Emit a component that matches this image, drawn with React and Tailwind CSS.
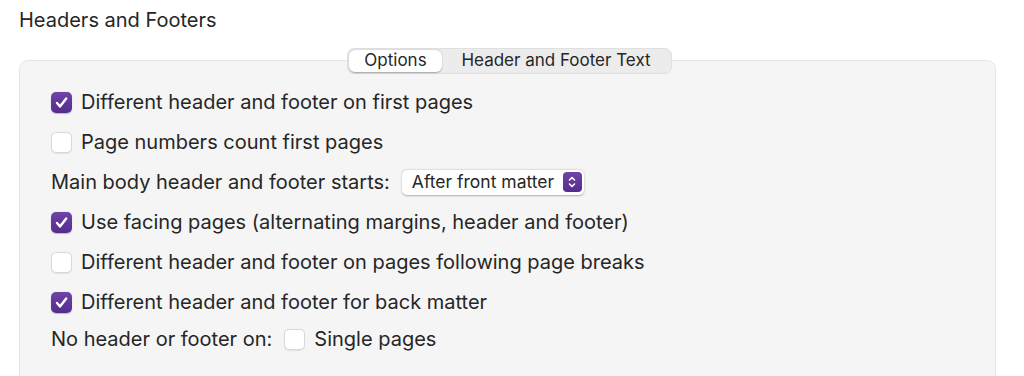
import React from 'react'

const font = { fontFamily: 'Inter, "Liberation Sans", Arial, sans-serif' }

const Check = ({ checked }) =>
  checked ? (
    <span className="flex h-[21px] w-[21px] shrink-0 items-center justify-center rounded-[5px] bg-gradient-to-b from-[#6e45a8] to-[#552c8c] shadow-[0_0.5px_1px_rgba(0,0,0,0.25)]">
      <svg width="15" height="15" viewBox="0 0 15 15" fill="none">
        <path d="M3 8 L6 11.5 L12.2 3.5" stroke="white" strokeWidth="2.4" strokeLinecap="round" strokeLinejoin="round" />
      </svg>
    </span>
  ) : (
    <span className="h-[21px] w-[21px] shrink-0 rounded-[5px] border border-[#d9d9d9] bg-white shadow-[0_0.5px_1px_rgba(0,0,0,0.08)]" />
  )

const CheckRow = ({ checked, label }) => (
  <div className="flex h-[40px] items-center gap-[9px] pl-[31px]">
    <Check checked={checked} />
    <span>{label}</span>
  </div>
)

export default function App() {
  return (
    <div className="h-[376px] w-[1024px] overflow-hidden bg-white text-[20px] text-[#262626]" style={font}>
      <div className="pl-[19px] pt-[8px] text-[20px] leading-[24px]">Headers and Footers</div>
      <div className="relative mx-[19px] mt-[28px] h-[400px] w-[977px] rounded-[9px] border border-[#e6e6e6] bg-[#f5f5f5]">
        <div className="absolute left-[327px] top-[-13px] flex h-[26px] items-center rounded-[7px] border border-[#e0e0e0] bg-[#ececec] p-[1px] text-[17px]">
          <div className="flex h-[22px] w-[93px] items-center justify-center rounded-[6px] bg-white shadow-[0_0.5px_1.5px_rgba(0,0,0,0.3)]">Options</div>
          <div className="flex h-[22px] w-[228px] items-center justify-center">Header and Footer Text</div>
        </div>
        <div className="pt-[21px]">
          <CheckRow checked label="Different header and footer on first pages" />
          <CheckRow label="Page numbers count first pages" />
          <div className="flex h-[40px] items-center gap-[12px] pl-[31px]">
            <span>Main body header and footer starts:</span>
            <div className="flex h-[25px] w-[182px] items-center justify-between rounded-[5px] bg-white pl-[10px] pr-[2px] text-[17.5px] shadow-[0_0.5px_2px_rgba(0,0,0,0.3)]">
              <span>After front matter</span>
              <span className="flex h-[20px] w-[19px] items-center justify-center rounded-[4px] bg-gradient-to-b from-[#6e45a8] to-[#552c8c]">
                <svg width="10" height="14" viewBox="0 0 10 14" fill="none">
                  <path d="M2.5 5 L5 2.5 L7.5 5 M2.5 9 L5 11.5 L7.5 9" stroke="white" strokeWidth="1.6" strokeLinecap="round" strokeLinejoin="round" />
                </svg>
              </span>
            </div>
          </div>
          <CheckRow checked label="Use facing pages (alternating margins, header and footer)" />
          <CheckRow label="Different header and footer on pages following page breaks" />
          <CheckRow checked label="Different header and footer for back matter" />
          <div className="flex h-[34px] items-center gap-[12px] pl-[31px]">
            <span>No header or footer on:</span>
            <div className="flex items-center gap-[9px]">
              <Check />
              <span>Single pages</span>
            </div>
          </div>
        </div>
      </div>
    </div>
  )
}
